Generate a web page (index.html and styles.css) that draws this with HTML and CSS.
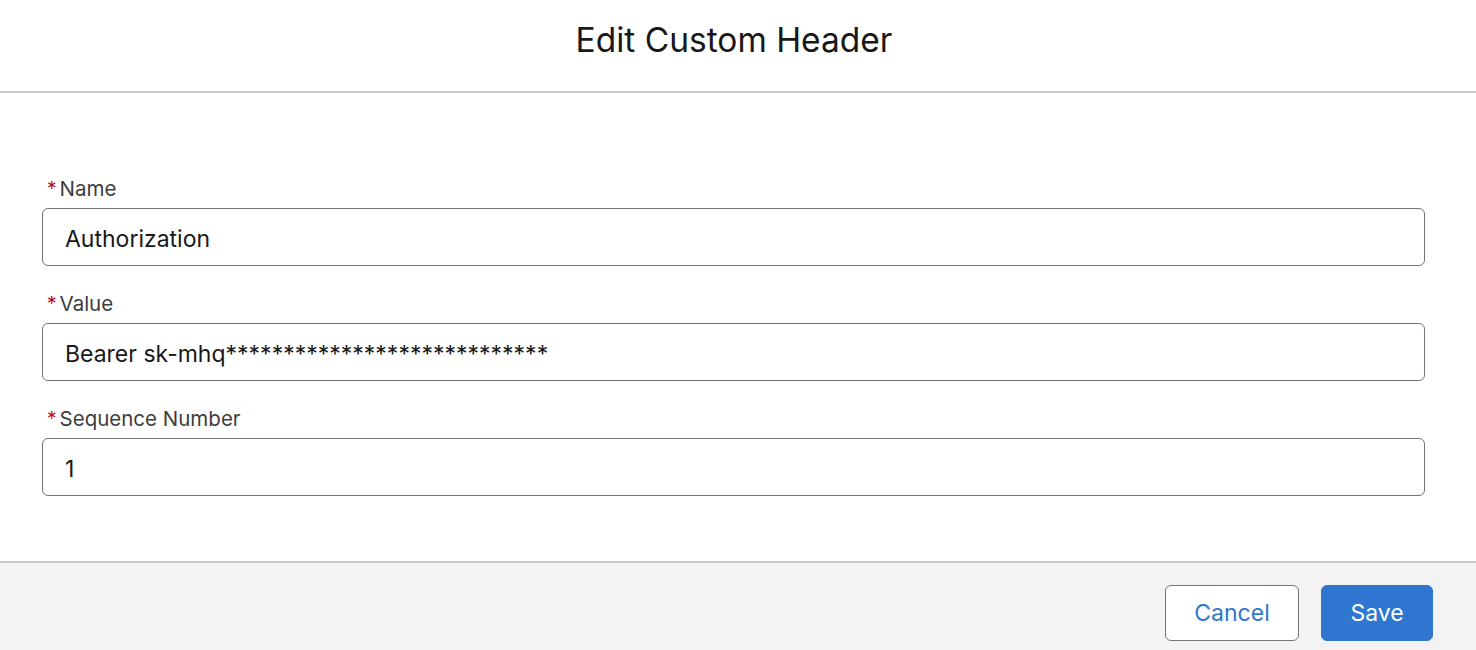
FILE: index.html
```html
<!DOCTYPE html>
<html lang="en">
<head>
<meta charset="utf-8">
<title>Edit Custom Header</title>
<link rel="stylesheet" href="styles.css">
</head>
<body>
<div class="modal">
  <header class="modal-header">
    <h1 class="title">Edit Custom Header</h1>
  </header>
  <main class="modal-body">
    <div class="field">
      <label class="label"><abbr class="req">*</abbr>Name</label>
      <div class="input">Authorization</div>
    </div>
    <div class="field">
      <label class="label"><abbr class="req">*</abbr>Value</label>
      <div class="input">Bearer sk-mhq****************************</div>
    </div>
    <div class="field">
      <label class="label"><abbr class="req">*</abbr>Sequence Number</label>
      <div class="input">1</div>
    </div>
  </main>
  <footer class="modal-footer">
    <button class="btn btn-neutral">Cancel</button>
    <button class="btn btn-brand">Save</button>
  </footer>
</div>
</body>
</html>
```
FILE: styles.css
```css
* { box-sizing: border-box; }
html, body { margin: 0; padding: 0; }
body {
  font-family: Inter, "Noto Sans", "Liberation Sans", sans-serif;
  color: #181818;
  background: #fff;
  width: 1476px;
  height: 650px;
  overflow: hidden;
}
.modal { display: flex; flex-direction: column; height: 650px; }
.modal-header {
  height: 93px;
  border-bottom: 2px solid #c9c9c9;
  display: flex;
  justify-content: center;
  padding: 19px 8px 0 0;
}
.title {
  margin: 0;
  font-weight: 400;
  font-size: 33.5px;
  line-height: 42px;
  color: #181818;
}
.modal-body {
  flex: 1;
  padding: 84px 51px 0 42px;
  display: flex;
  flex-direction: column;
  gap: 26px;
}
.field { display: flex; flex-direction: column; }
.label {
  font-size: 20.5px;
  line-height: 24px;
  height: 24px;
  color: #3e3e3c;
  margin-bottom: 7px;
  display: flex;
  align-items: baseline;
}
.req {
  color: #ba0517;
  text-decoration: none;
  font-size: 19px;
  line-height: 1;
  position: relative;
  top: -1px;
  margin: 0 3px 0 5px;
}
.input {
  height: 58px;
  border: 1px solid #747474;
  border-radius: 6px;
  padding: 3px 22px 0;
  display: flex;
  align-items: center;
  font-size: 23px;
  color: #181818;
}
.modal-footer {
  height: 89px;
  border-top: 2px solid #c9c9c9;
  background: #f3f3f3;
  display: flex;
  justify-content: flex-end;
  align-items: flex-start;
  padding: 22px 43px 0 0;
  gap: 22px;
}
.btn {
  height: 56px;
  border-radius: 6px;
  font-family: inherit;
  font-size: 23px;
  padding: 0;
  cursor: pointer;
}
.btn-neutral {
  width: 134px;
  background: #fff;
  border: 1px solid #747474;
  color: #2e76cf;
}
.btn-brand {
  width: 112px;
  background: #2e76cf;
  border: 1px solid #2e76cf;
  color: #fff;
}
```
